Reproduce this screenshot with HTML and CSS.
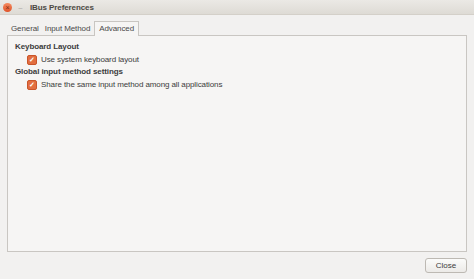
FILE: index.html
```html
<!DOCTYPE html>
<html lang="en">
<head>
  <meta charset="UTF-8">
  <title>IBus Preferences</title>
  <link rel="stylesheet" href="styles.css">
</head>
<body>

  <!-- Title bar -->
  <div class="titlebar">
    <span class="btn-close">&#215;</span>
    <span class="btn-min">&#8211;</span>
    <span class="title">IBus Preferences</span>
  </div>

  <div class="window">
    <!-- Tabs -->
    <div class="tabs">
      <span class="tab">General</span>
      <span class="tab">Input Method</span>
      <span class="tab active">Advanced</span>
    </div>

    <!-- Advanced page -->
    <div class="page">
      <div class="section">Keyboard Layout</div>
      <label class="check-row"><span class="check">&#10003;</span>Use system keyboard layout</label>
      <div class="section">Global input method settings</div>
      <label class="check-row"><span class="check">&#10003;</span>Share the same input method among all applications</label>
    </div>

    <div class="actions">
      <button class="close-btn">Close</button>
    </div>
  </div>

</body>
</html>
```

FILE: styles.css
```css
body {
  margin: 0;
  width: 474px;
  height: 279px;
  overflow: hidden;
  background-color: #f2f1f0;
  font-family: "Liberation Sans", Arial, sans-serif;
  font-size: 8px;
  letter-spacing: -0.1px;
  color: #3c3c3c;
}

.titlebar {
  height: 14px;
  display: flex;
  align-items: center;
  background: linear-gradient(#ebe9e5, #dedbd5);
  border-bottom: 1px solid #d4d0c9;
  padding-left: 3px;
}

.btn-close {
  width: 9px;
  height: 9px;
  border-radius: 50%;
  background: linear-gradient(#f58a5e, #e0532a);
  color: #7a2b12;
  font-size: 7px;
  line-height: 9px;
  text-align: center;
}

.btn-min {
  width: 9px;
  height: 9px;
  margin-left: 4px;
  border-radius: 50%;
  color: #a9a59e;
  font-size: 7px;
  line-height: 9px;
  text-align: center;
}

.title {
  margin-left: 5px;
  font-weight: bold;
  color: #4b4842;
  font-size: 8px;
}

.window {
  padding: 5px 7px 0 7px;
}

.tabs {
  display: flex;
  align-items: flex-end;
  height: 15px;
  padding-left: 1px;
}

.tab {
  padding: 0 3px;
  line-height: 13px;
  color: #4a4a4a;
}

.tab.active {
  margin-left: 1px;
  padding: 0 4px;
  background-color: #f6f5f4;
  border: 1px solid #c9c6c2;
  border-bottom: none;
  line-height: 14px;
  margin-bottom: -1px;
  position: relative;
  z-index: 1;
}

.page {
  height: 217px;
  background-color: #f6f5f4;
  border: 1px solid #c9c6c2;
  padding: 5px 7px;
  box-sizing: border-box;
}

.section {
  font-weight: bold;
  line-height: 12px;
}

.check-row {
  display: flex;
  align-items: center;
  line-height: 13px;
  padding-left: 12px;
}

.check {
  width: 8px;
  height: 8px;
  border-radius: 2px;
  background: #e26e40;
  border: 1px solid #c9552a;
  color: #fff;
  font-size: 7px;
  font-weight: bold;
  line-height: 8px;
  text-align: center;
  margin-right: 4px;
}

.actions {
  display: flex;
  justify-content: flex-end;
  padding-top: 6px;
}

.close-btn {
  width: 42px;
  height: 15px;
  padding: 0;
  font-family: inherit;
  font-size: 8px;
  color: #3c3c3c;
  background: linear-gradient(#fbfbfa, #eceae7);
  border: 1px solid #bdb9b3;
  border-radius: 3px;
}
```
